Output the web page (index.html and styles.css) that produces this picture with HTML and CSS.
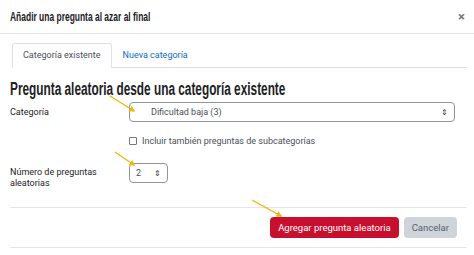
FILE: index.html
```html
<!DOCTYPE html>
<html lang="es">
<head>
    <meta charset="UTF-8">
    <title>Añadir una pregunta al azar al final</title>
    <link rel="stylesheet" href="styles.css">
</head>
<body>
    <div class="modal">
        <div class="modal-header">
            <h5 class="modal-title"><span class="narrow">Añadir una pregunta al azar al final</span></h5>
            <span class="close">&times;</span>
        </div>
        <div class="modal-body">
            <ul class="tabs">
                <li class="tab active">Categoría existente</li>
                <li class="tab">Nueva categoría</li>
            </ul>
            <h3 class="section-title"><span class="narrow">Pregunta aleatoria desde una categoría existente</span></h3>
            <div class="form-row">
                <label class="form-label">Categoría</label>
                <div class="select wide">
                    <span>Dificultad baja (3)</span>
                    <span class="caret">&#8661;</span>
                </div>
            </div>
            <div class="form-row check-row">
                <span class="form-label"></span>
                <label class="check"><span class="box"></span>Incluir también preguntas de subcategorías</label>
            </div>
            <div class="form-row number-row">
                <label class="form-label two-line">Número de preguntas aleatorias</label>
                <div class="select small">
                    <span>2</span>
                    <span class="caret">&#8661;</span>
                </div>
            </div>
            <div class="footer">
                <button class="btn btn-primary">Agregar pregunta aleatoria</button>
                <button class="btn btn-secondary">Cancelar</button>
            </div>
        </div>
    </div>

    <svg class="annotations" width="474" height="255" viewBox="0 0 474 255">
        <defs>
            <marker id="head" markerWidth="6" markerHeight="6" refX="4.5" refY="3" orient="auto" markerUnits="userSpaceOnUse">
                <path d="M0,0 L6,3 L0,6 z" fill="#f7b500"/>
            </marker>
        </defs>
        <line x1="110" y1="96" x2="134" y2="111" stroke="#f7b500" stroke-width="1.3" marker-end="url(#head)"/>
        <line x1="115" y1="152" x2="134" y2="165" stroke="#f7b500" stroke-width="1.3" marker-end="url(#head)"/>
        <line x1="252" y1="200" x2="281" y2="216" stroke="#f7b500" stroke-width="1.3" marker-end="url(#head)"/>
    </svg>
</body>
</html>
```

FILE: styles.css
```css
body {
    margin: 0;
    background: #fff;
    font-family: Roboto, "Liberation Sans", sans-serif;
    font-size: 9px;
    color: #1d2125;
}

.modal {
    width: 474px;
    height: 255px;
}

.modal-header {
    display: flex;
    align-items: center;
    justify-content: space-between;
    height: 34px;
    padding: 0 9px 0 10px;
    border-bottom: 1px solid #e6e6e6;
    box-sizing: border-box;
}

.narrow {
    display: inline-block;
    white-space: nowrap;
    transform-origin: left center;
}

.modal-title {
    margin: 0;
    font-family: "Liberation Sans", sans-serif;
    font-size: 13px;
    font-weight: bold;
    color: #1d2125;
}

.modal-title .narrow {
    transform: scaleX(0.65);
}

.close {
    font-size: 13px;
    font-weight: bold;
    color: #777;
}

.modal-body {
    padding: 0 7px 0 10px;
}

.tabs {
    display: flex;
    margin: 9px 0 0 2px;
    padding: 0;
    list-style: none;
    border-bottom: 1px solid #dee2e6;
}

.tab {
    padding: 0 10px;
    height: 23px;
    line-height: 23px;
    color: #0f6cbf;
    border: 1px solid transparent;
    border-radius: 3px 3px 0 0;
    margin-bottom: -1px;
}

.tab.active {
    color: #495057;
    border-color: #dee2e6 #dee2e6 #fff;
    background: #fff;
}

.section-title {
    margin: 11px 0 0;
    font-family: "Liberation Sans", sans-serif;
    font-size: 18px;
    font-weight: bold;
    line-height: 20px;
    color: #1d2125;
}

.section-title .narrow {
    transform: scaleX(0.657);
}

.form-row {
    display: flex;
    align-items: center;
    margin-top: 3px;
}

.form-label {
    width: 119px;
    flex-shrink: 0;
    color: #1d2125;
}

.select {
    display: flex;
    align-items: center;
    justify-content: space-between;
    height: 20px;
    box-sizing: border-box;
    border: 1px solid #8f959e;
    border-radius: 4px;
    padding: 0 6px;
    color: #495057;
}

.select.wide {
    width: 326px;
    padding-left: 21px;
}

.select.small {
    width: 39px;
}

.caret {
    font-size: 8px;
    color: #333;
}

.check-row {
    margin-top: 14px;
}

.check {
    display: flex;
    align-items: center;
    color: #495057;
}

.box {
    width: 6px;
    height: 6px;
    border: 1px solid #777;
    border-radius: 1px;
    margin-right: 5px;
}

.number-row {
    margin-top: 17px;
    align-items: flex-start;
}

.two-line {
    width: 90px;
    margin-right: 29px;
    line-height: 11px;
    padding-top: 4px;
}

.footer {
    display: flex;
    justify-content: flex-end;
    gap: 5px;
    margin-top: 18px;
    padding: 9px 10px 9px 0;
    border-top: 1px solid #e6e6e6;
    border-bottom: 1px solid #e6e6e6;
}

.btn {
    height: 21px;
    padding: 0 8px;
    border: none;
    border-radius: 4px;
    font-family: Roboto, "Liberation Sans", sans-serif;
    font-size: 9.5px;
}

.btn-primary {
    background: #c8102e;
    color: #fff;
}

.btn-secondary {
    background: #ced4da;
    color: #5a6068;
}

.annotations {
    position: absolute;
    top: 0;
    left: 0;
    pointer-events: none;
}
```
